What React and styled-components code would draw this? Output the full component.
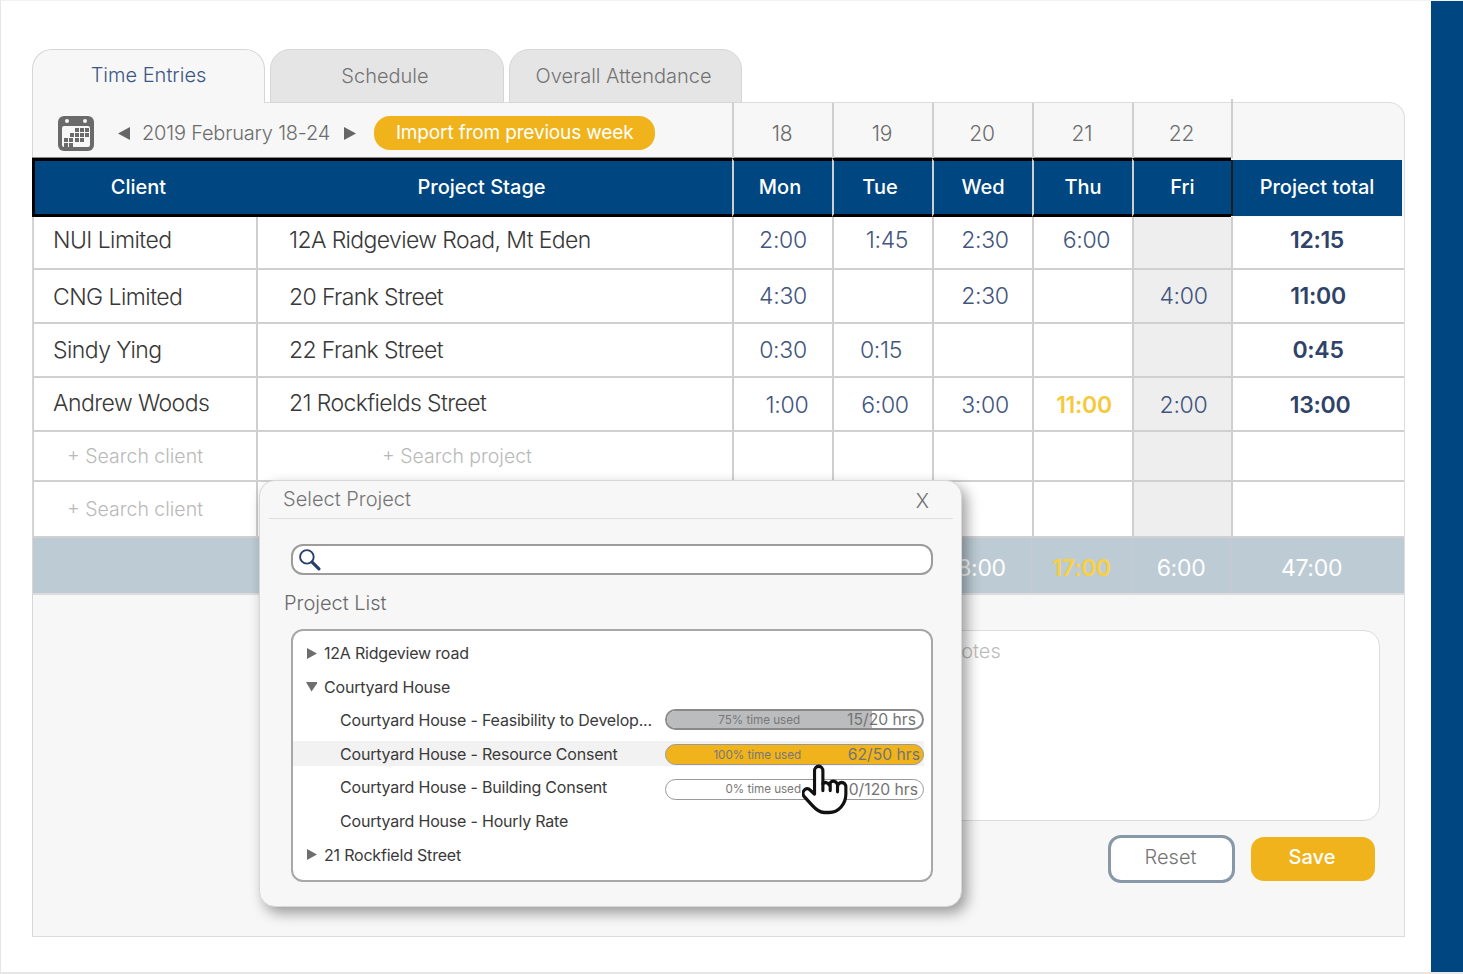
import React from "react";
import styled, { createGlobalStyle } from "styled-components";

const Global = createGlobalStyle`
  html, body { margin: 0; padding: 0; background: #fff; }
  * { box-sizing: border-box; }
  body { font-family: Inter, "Liberation Sans", sans-serif; font-weight: 300; }
`;

const HEAD_COLS = "224px 476px 100px 100px 100px 100px 99px 173px";
const BODY_COLS = "222px 476px 100px 100px 100px 100px 99px 174px";
const YELLOW = "#f0b31c";
const NAVY = "#004680";

const Page = styled.div`
  width: 1463px; height: 974px; display: flex; overflow: hidden;
  border-left: 1px solid #e6e6e6; border-bottom: 2px solid #e6e6e6; border-top: 1px solid #f2f2f2;
`;
const Main = styled.main`
  flex: 1; padding: 48px 0 0 31px; min-width: 0;
`;
const SideBar = styled.aside`
  width: 32px; flex: none; background: ${NAVY};
`;
const Tabs = styled.nav`
  display: flex; gap: 5px; height: 54px; position: relative; z-index: 2; margin-bottom: -1px;
`;
const Tab = styled.div`
  width: ${p => p.$w}px; display: flex; align-items: center; justify-content: center;
  padding-bottom: ${p => (p.$active ? 3 : 1)}px;
  padding-right: ${p => (p.$active ? 0 : 4)}px;
  border: 1px solid #d6d6d6; border-radius: 20px 20px 0 0;
  font-size: 20px;
  background: ${p => (p.$active ? "#f7f7f7" : "#e5e5e5")};
  color: ${p => (p.$active ? "#3d5685" : "#737373")};
  ${p => p.$active && "border-bottom: 0;"}
`;
const Panel = styled.section`
  position: relative; width: 1373px; height: 835px; background: #f7f7f7;
  border: 1px solid #dcdcdc; border-left: 1px solid #d6d6d6; border-top-right-radius: 16px;
`;
const Row = styled.div`
  display: grid; grid-template-columns: ${HEAD_COLS}; margin-left: -1px; width: 1372px;
`;
const StripRow = styled(Row)`
  height: 55px;
`;
const Toolbar = styled.div`
  grid-column: span 2; display: flex; align-items: center; padding: 2px 0 0 25px;
`;
const DateLabel = styled.span`
  font-size: 20px; color: #6c6c6c; margin: 3px 14px 0 12px; letter-spacing: -.2px;
`;
const ArrowBtn = styled.svg`
  width: 12px; height: 13px; fill: #666; flex: none; margin-top: 3px;
`;
const CalWrap = styled.svg`
  width: 38px; height: 37px; flex: none; margin-right: 23px; margin-top: 3px;
`;
const ImportButton = styled.div`
  margin: 3px 0 0 18px; width: 281px; height: 34px; border-radius: 16px; background: ${YELLOW};
  color: #fff; font-size: 19px; font-weight: 400; letter-spacing: -.15px;
  display: flex; align-items: center; justify-content: center; padding-bottom: 2px;
`;
const DayCell = styled.div`
  position: relative; display: flex; align-items: center; justify-content: center;
  padding: 5px 2px 0 0;
  border-left: 2px solid #cfcfcf; color: #6c6c6c; font-size: 21px; letter-spacing: -.2px;
  ${p => p.$tall && `
    &::before { content: ""; position: absolute; left: -2px; top: -4px; height: 4px; width: 2px; background: #cfcfcf; }
  `}
`;
const HeadRow = styled(Row)`
  height: 59px; color: #fff; font-size: 20px; font-weight: 500;
`;
const HeadCell = styled.div`
  background: ${NAVY}; display: flex; align-items: center; justify-content: center;
  border-top: 3px solid #000; border-bottom: 3px solid #000;
  box-shadow: 0 -1px 0 #8a8a8a;
  padding-right: ${p => p.$pad || 0}px; padding-bottom: 2px;
  ${p => p.$first && "border-left: 3px solid #000;"}
  ${p => p.$line && "border-left: 2px solid #cfcfcf;"}
`;
const TotalHead = styled.div`
  background: ${NAVY}; display: flex; align-items: center; justify-content: center;
  margin: 2px 2px 1px 0; border-left: 2px solid #1d1d1d; padding: 0 1px 2px 0;
`;
const BodyRow = styled.div`
  display: grid; grid-template-columns: ${BODY_COLS};
  height: ${p => p.$h}px; border-bottom: 2px solid #d0d0d0; background: #fff;
  width: 1371px;
  font-size: 23px; border-left: 1px solid #d0d0d0;
`;
const Cell = styled.div`
  display: flex; align-items: center;
  padding-bottom: ${p => Math.max(p.$up || 0, 0)}px;
  padding-top: ${p => Math.max(-(p.$up || 0), 0)}px;
  ${p => p.$line && "border-left: 2px solid #cfcfcf;"}
`;
const ClientCell = styled(Cell)`
  padding-left: 19px; color: #383838; letter-spacing: -.55px;
`;
const StageCell = styled(Cell)`
  padding-left: 31px; color: #383838; letter-spacing: -.62px;
`;
const PlaceholderCell = styled(Cell)`
  justify-content: center; color: #b9b9b9; font-size: 19.500px; padding-right: ${p => p.$pr || 0}px;
`;
const shifted = p => `
  padding-left: ${Math.max(p.$shift || 0, 0)}px;
  padding-right: ${Math.max(-(p.$shift || 0), 0)}px;
`;
const TimeCell = styled(Cell)`
  justify-content: center; border-left: 2px solid #cfcfcf; color: ${p => (p.$warn ? "#f6c93d" : "#42557e")};
  font-weight: ${p => (p.$warn ? 600 : 300)}; letter-spacing: -.3px;
  ${shifted}
  background: ${p => (p.$muted ? "#eeeeee" : "#fff")};
`;
const ProjectTotal = styled(Cell)`
  justify-content: center; border-left: 2px solid #cfcfcf; color: #2f4268; font-weight: 600; letter-spacing: -.3px;
  ${shifted}
`;
const TotalsRow = styled.div`
  display: grid; grid-template-columns: ${BODY_COLS};
  height: 57px; background: #bccbd4; color: #fff; font-size: 23px; letter-spacing: -.3px;
  width: 1371px; border-bottom: 2px solid #dcdcdc;
`;
const TotalCell = styled.div`
  display: flex; align-items: center; justify-content: center; padding-top: 5px;
  border-left: 1px solid #c9cccf; font-weight: ${p => (p.$warn ? 600 : 400)};
  color: ${p => (p.$warn ? "#fbd03f" : "#fff")};
  padding-right: ${p => p.$pr || 0}px;
`;
const NotesArea = styled.div`
  display: flex; flex-direction: column; align-items: flex-end; padding: 35px 24px 0 0;
`;
const Notes = styled.div`
  width: 460px; height: 191px; background: #fff; border: 1px solid #dcdcdc; border-radius: 16px;
  padding: 8px 0 0 25px; color: #bdbdbd; font-size: 20px;
`;
const Actions = styled.div`
  display: flex; gap: 16px; margin-top: 14px; align-items: center; margin-right: 5px;
`;
const ResetButton = styled.div`
  width: 127px; height: 48px; border: 3px solid #8898a8; border-radius: 13px; background: #fff;
  color: #757575; font-size: 20px; display: flex; align-items: center; justify-content: center; padding: 0 2px 5px 0;
`;
const SaveButton = styled.div`
  width: 124px; height: 44px; border-radius: 13px; background: ${YELLOW};
  color: #fff; font-size: 20px; font-weight: 500; display: flex; align-items: center; justify-content: center; padding: 0 2px 4px 0;
`;

/* dialog over the table */
const Modal = styled.div`
  position: absolute; left: 226px; top: 377px; width: 703px; height: 427px; z-index: 5;
  background: #f7f7f7; border-radius: 16px; border: 1px solid #d8d8d8;
  box-shadow: 5px 6px 14px rgba(0,0,0,.38);
  padding: 0 28px 0 31px;
`;
const ModalHead = styled.header`
  display: flex; justify-content: space-between; align-items: flex-end;
  height: 38px; margin: 0 -20px 0 -22px; padding: 0 24px 0 14px;
  border-bottom: 1px solid #dedede; color: #757575; font-size: 20px;
`;
const ModalTitle = styled.span`
  margin-bottom: 7px;
`;
const CloseX = styled.span`
  font-size: 20px; color: #6f6f6f; transform: translateY(-5px);
`;
const SearchBox = styled.div`
  height: 31px; margin-top: 25px; border: 2px solid #9c9c9c; border-radius: 12px; background: #fff;
  display: flex; align-items: center; padding-left: 5px;
`;
const ListTitle = styled.div`
  color: #6a6a6a; font-size: 20px; margin: 14px 0 12px -7px; line-height: 28px;
`;
const ListBox = styled.div`
  height: 253px; border: 2px solid #a8a8a8; border-radius: 12px; background: #fff; padding-top: 5px;
`;
const ListRow = styled.div`
  height: ${p => p.$h || 34}px; display: flex; align-items: center; color: #3a3a3a; font-size: 16px;
  letter-spacing: -.2px;
  font-weight: 400; padding-left: ${p => (p.$child ? 47 : 13)}px;
  background: ${p => (p.$hot ? "#f2f2f2" : "transparent")};
`;
const ListRowWrap = styled.div`
  height: 33.700px; display: flex; align-items: center;
`;
const Caret = styled.svg`
  width: 11px; height: 11px; fill: #6e6e6e; margin-right: 7px; flex: none;
`;
const RowLabel = styled.span`
  width: 325px; white-space: nowrap; flex: none;
`;
const Bar = styled.div`
  position: relative; width: 259px; height: 21px; flex: none; border-radius: 11px; overflow: hidden;
  background: ${p => (p.$bg || "#fff")}; border: ${p => p.$heavy ? "2px solid #8a8a8a" : "1px solid #999"};
  display: flex; align-items: center; justify-content: flex-end;
  transform: translateY(${p => p.$dy || 0}px);
`;
const BarFill = styled.div`
  position: absolute; left: 0; top: 0; bottom: 0; background: #bbbcbe;
`;
const BarLabel = styled.span`
  position: absolute; right: ${p => p.$r}px; font-size: 11.700px; letter-spacing: -.05px; color: #787878; white-space: nowrap;
`;
const BarHours = styled.span`
  position: relative; font-size: 15.700px; letter-spacing: 0; color: #737373; padding-right: ${p => p.$pr}px; white-space: nowrap;
`;
const Hand = styled.svg`
  position: absolute; left: 542px; top: 283px; width: 47px; height: 52px; z-index: 6;
`;

const CalendarIcon = () => (
  <CalWrap viewBox="0 0 38 37">
    <rect x="1" y="1" width="36" height="35" rx="6" fill="#6a6a6a" />
    <rect x="5" y="11" width="28" height="21" rx="2" fill="#f7f7f7" />
    <circle cx="10" cy="6" r="2" fill="#f7f7f7" />
    <circle cx="28" cy="6" r="2" fill="#f7f7f7" />
    {[[19, 14], [24, 14], [29, 14], [14, 19], [19, 19], [24, 19], [29, 19], [8, 24], [13, 24], [19, 24], [24, 24], [8, 29], [13, 29]].map(([x, y]) => (
      <rect key={`${x}-${y}`} x={x - 1} y={y - 1} width="4" height="4" fill="#6a6a6a" />
    ))}
  </CalWrap>
);
const Left = () => <ArrowBtn viewBox="0 0 12 13"><path d="M12 0v13L0 6.5z" /></ArrowBtn>;
const Right = () => <ArrowBtn viewBox="0 0 12 13"><path d="M0 0v13l12-6.5z" /></ArrowBtn>;
const CaretRight = () => <Caret viewBox="0 0 11 11"><path d="M1 0v11l10-5.500z" /></Caret>;
const CaretDown = () => <Caret viewBox="0 0 11 11"><path d="M0 1h12L5.500 10.500z" /></Caret>;

const rows = [
  { h: 53, up: 6, tup: 6, client: "NUI Limited", stage: "12A Ridgeview Road, Mt Eden", times: ["2:00", "1:45", "2:30", "6:00", ""], shifts: [0, 8, 4, 7, 2], total: "12:15", ts: -4 },
  { h: 54, up: -2, tup: 0, client: "CNG Limited", stage: "20 Frank Street", times: ["4:30", "", "2:30", "", "4:00"], shifts: [0, 2, 4, 2, 2], total: "11:00", ts: -2 },
  { h: 54, up: 0, tup: 0, client: "Sindy Ying", stage: "22 Frank Street", times: ["0:30", "0:15", "", "", ""], shifts: [0, -4, 2, 2, 2], total: "0:45", ts: -2 },
  { h: 54, up: 2, tup: -2, client: "Andrew Woods", stage: "21 Rockfields Street", times: ["1:00", "6:00", "3:00", "11:00", "2:00"], shifts: [8, 4, 4, 2, 2], total: "13:00", ts: 2, warn: 3 },
];

const ListBar = ({ pct, label, hours, bg, heavy, r, pr, dy }) => (
  <Bar $bg={bg} $heavy={heavy} $dy={dy}>
    {pct ? <BarFill style={{ width: `${pct}%` }} /> : null}
    <BarLabel $r={r}>{label}</BarLabel>
    <BarHours $pr={pr}>{hours}</BarHours>
  </Bar>
);

export default function App() {
  return (
    <Page>
      <Global />
      <Main>
        <Tabs>
          <Tab $active $w={233}>Time Entries</Tab>
          <Tab $w={234}>Schedule</Tab>
          <Tab $w={233}>Overall Attendance</Tab>
        </Tabs>
        <Panel>
          <StripRow>
            <Toolbar>
              <CalendarIcon />
              <Left />
              <DateLabel>2019 February 18-24</DateLabel>
              <Right />
              <ImportButton>Import from previous week</ImportButton>
            </Toolbar>
            {["18", "19", "20", "21", "22"].map(d => <DayCell key={d}>{d}</DayCell>)}
            <DayCell $tall />
          </StripRow>
          <HeadRow>
            <HeadCell $first $pad={14}>Client</HeadCell>
            <HeadCell $pad={25}>Project Stage</HeadCell>
            <HeadCell $line $pad={6}>Mon</HeadCell>
            <HeadCell $line $pad={6}>Tue</HeadCell>
            <HeadCell $line>Wed</HeadCell>
            <HeadCell $line>Thu</HeadCell>
            <HeadCell $line>Fri</HeadCell>
            <TotalHead>Project total</TotalHead>
          </HeadRow>
          {rows.map(r => (
            <BodyRow key={r.client} $h={r.h}>
              <ClientCell $up={r.up}>{r.client}</ClientCell>
              <StageCell $line $up={r.up}>{r.stage}</StageCell>
              {r.times.map((t, i) => (
                <TimeCell key={i} $muted={i === 4} $warn={r.warn === i} $shift={r.shifts[i]} $up={r.tup}>{t}</TimeCell>
              ))}
              <ProjectTotal $shift={r.ts} $up={r.tup}>{r.total}</ProjectTotal>
            </BodyRow>
          ))}
          <BodyRow $h={50}>
            <PlaceholderCell $pr={20}>+ Search client</PlaceholderCell>
            <PlaceholderCell $line $pr={76}>+ Search project</PlaceholderCell>
            {[0, 1, 2, 3, 4].map(i => <TimeCell key={i} $muted={i === 4} />)}
            <ProjectTotal />
          </BodyRow>
          <BodyRow $h={56}>
            <PlaceholderCell $pr={20}>+ Search client</PlaceholderCell>
            <PlaceholderCell $line />
            {[0, 1, 2, 3, 4].map(i => <TimeCell key={i} $muted={i === 4} />)}
            <ProjectTotal />
          </BodyRow>
          <TotalsRow>
            <span />
            <span />
            <TotalCell>8:00</TotalCell>
            <TotalCell>8:00</TotalCell>
            <TotalCell>8:00</TotalCell>
            <TotalCell $warn>17:00</TotalCell>
            <TotalCell>6:00</TotalCell>
            <TotalCell $pr={12}>47:00</TotalCell>
          </TotalsRow>
          <NotesArea>
            <Notes>Notes</Notes>
            <Actions>
              <ResetButton>Reset</ResetButton>
              <SaveButton>Save</SaveButton>
            </Actions>
          </NotesArea>

          <Modal>
            <ModalHead>
              <ModalTitle>Select Project</ModalTitle>
              <CloseX>X</CloseX>
            </ModalHead>
            <SearchBox>
              <svg width="23" height="23" viewBox="0 0 22 22" fill="none">
                <circle cx="8.500" cy="8.500" r="6.500" stroke="#26406b" strokeWidth="1.800" fill="#fff" />
                <path d="M13.500 13.500L20 20" stroke="#26406b" strokeWidth="3" strokeLinecap="round" />
              </svg>
            </SearchBox>
            <ListTitle>Project List</ListTitle>
            <ListBox>
              <ListRow><CaretRight />12A Ridgeview road</ListRow>
              <ListRow $h={33}><CaretDown />Courtyard House</ListRow>
              <ListRowWrap>
                <ListRow $child $h={25}>
                  <RowLabel>Courtyard House - Feasibility to Develop...</RowLabel>
                  <ListBar pct={80.5} label="75% time used" hours="15/20 hrs" heavy r={122} pr={6} />
                </ListRow>
              </ListRowWrap>
              <ListRowWrap>
                <ListRow $child $hot $h={25}>
                  <RowLabel>Courtyard House - Resource Consent</RowLabel>
                  <ListBar dy={1} bg={YELLOW} label="100% time used" hours="62/50 hrs" r={122} pr={3} />
                </ListRow>
              </ListRowWrap>
              <ListRowWrap>
                <ListRow $child $h={25}>
                  <RowLabel>Courtyard House - Building Consent</RowLabel>
                  <ListBar dy={2} label="0% time used" hours="0/120 hrs" r={122} pr={5} />
                </ListRow>
              </ListRowWrap>
              <ListRowWrap>
                <ListRow $child $h={25}>Courtyard House - Hourly Rate</ListRow>
              </ListRowWrap>
              <ListRow><CaretRight />21 Rockfield Street</ListRow>
            </ListBox>
            <Hand viewBox="0 1 22.500 22.500" preserveAspectRatio="none" fill="#fff" stroke="#111" strokeWidth="1.500" strokeLinecap="round" strokeLinejoin="round">
              <path d="M10 9.500V4a2 2 0 0 0-4 0v10l-2.150-1.760a2 2 0 0 0-2.830 2.820l3.600 3.600C6.100 20.140 7.800 22 10.600 22H13a8 8 0 0 0 8-8v-3a2 2 0 0 0-4 0 2 2 0 0 0-4-1 2 2 0 0 0-3-.5z" />
              <path d="M10 9.500v3M13.500 9.500v3M17 10.500v2.500" />
            </Hand>
          </Modal>
        </Panel>
      </Main>
      <SideBar />
    </Page>
  );
}
